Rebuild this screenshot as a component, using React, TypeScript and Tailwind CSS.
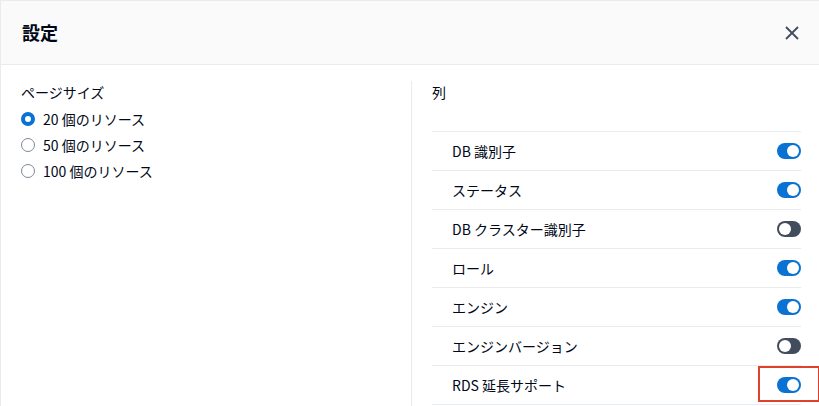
import React from "react";

const font = { fontFamily: '"Noto Sans CJK JP", "Noto Sans", sans-serif' };

function Toggle({ on }: { on: boolean }) {
  return (
    <div
      className={`relative w-[24px] h-[16px] rounded-full ${on ? "bg-[#0972d3]" : "bg-[#414d5c]"}`}
    >
      <div
        className={`absolute top-[2px] w-[12px] h-[12px] rounded-full bg-white ${on ? "left-[10px]" : "left-[2px]"}`}
      />
    </div>
  );
}

function Radio({ checked, label }: { checked: boolean; label: string }) {
  return (
    <div className="flex items-center h-[26px]">
      <div
        className={`w-[14px] h-[14px] rounded-full box-border ${checked ? "border-[4px] border-[#0972d3]" : "border border-[#7d8998]"}`}
      />
      <span className="ml-[8px] text-[14px] text-[#000716]">{label}</span>
    </div>
  );
}

const rows: { label: string; on: boolean; highlight?: boolean }[] = [
  { label: "DB 識別子", on: true },
  { label: "ステータス", on: true },
  { label: "DB クラスター識別子", on: false },
  { label: "ロール", on: true },
  { label: "エンジン", on: true },
  { label: "エンジンバージョン", on: false },
  { label: "RDS 延長サポート", on: true, highlight: true },
];

export default function App() {
  return (
    <div
      className="w-[819px] h-[406px] overflow-hidden bg-white border-l border-t border-[#e9ebed] text-[#000716]"
      style={font}
    >
      <div className="h-[64px] bg-[#fafafa] border-b border-[#e9ebed] flex items-center justify-between pl-[21px] pr-[20px]">
        <h1 className="text-[18px] font-bold leading-none -mt-[1px]">設定</h1>
        <svg width="14" height="14" viewBox="0 0 14 14">
          <path d="M1 1L13 13M13 1L1 13" stroke="#414d5c" strokeWidth="1.8" fill="none" />
        </svg>
      </div>
      <div className="flex pt-[16px]">
        <div className="w-[411px] pl-[20px] border-r border-[#e9ebed] min-h-[340px]">
          <div className="text-[14px] h-[22px] leading-[22px]">ページサイズ</div>
          <div className="mt-[3px]">
            <Radio checked label="20 個のリソース" />
            <Radio checked={false} label="50 個のリソース" />
            <Radio checked={false} label="100 個のリソース" />
          </div>
        </div>
        <div className="flex-1 pl-[20px] pr-[18px]">
          <div className="text-[14px] h-[22px] leading-[22px]">列</div>
          <div className="mt-[28px] border-t border-[#e9ebed]">
            {rows.map((r) => (
              <div
                key={r.label}
                className="relative h-[39px] border-b border-[#e9ebed] flex items-center justify-between pl-[20px]"
              >
                <span className="text-[14px]">{r.label}</span>
                <Toggle on={r.on} />
                {r.highlight && (
                  <div className="absolute right-[-19px] top-[0px] w-[62px] h-[36px] border-2 border-[#e0412b]" />
                )}
              </div>
            ))}
          </div>
        </div>
      </div>
    </div>
  );
}
